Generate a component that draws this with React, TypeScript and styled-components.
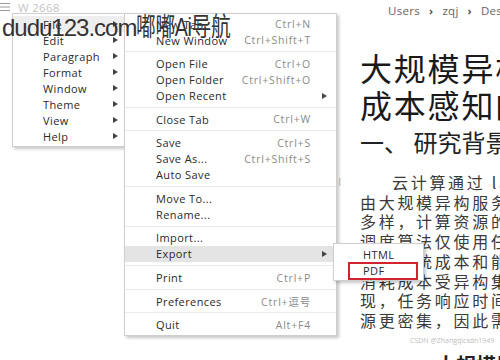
import React from 'react';
import styled, { createGlobalStyle } from 'styled-components';

const GlobalStyle = createGlobalStyle`
  html, body {
    margin: 0;
    padding: 0;
    background: #ffffff;
  }
  body {
    width: 500px;
    height: 360px;
    overflow: hidden;
    font-family: "Open Sans", "Noto Sans CJK SC", sans-serif;
  }
`;

const Page = styled.div`
  position: relative;
  width: 500px;
  height: 360px;
  overflow: hidden;
  display: flex;
  background: #ffffff;
`;

const SidePane = styled.div`
  width: 360px;
  flex-shrink: 0;
`;

const TitleBar = styled.div`
  display: flex;
  align-items: center;
  gap: 8px;
  height: 12px;
  padding-top: 1px;
  color: #c4c4c4;
  font-size: 11.5px;
  letter-spacing: 0.3px;
`;

const Editor = styled.main`
  flex: 1;
  min-width: 0;
  overflow: hidden;
  white-space: nowrap;
  font-family: "Noto Sans CJK SC", sans-serif;
  color: #1e1e1e;
`;

const Breadcrumb = styled.div`
  display: flex;
  align-items: center;
  gap: 9px;
  height: 14px;
  padding: 3px 0 0 28px;
  font-family: "Open Sans", sans-serif;
  font-size: 11.5px;
  color: #666;
  letter-spacing: 0.3px;

  b {
    font-size: 11px;
    color: #555;
  }
`;

const Title = styled.h1`
  margin: 32px 0 0;
  font-size: 32px;
  line-height: 37px;
  font-weight: 400;
  letter-spacing: 1.8px;
  color: #1a1a1a;
`;

const TitleLine = styled.span`
  display: block;
`;

const SectionHeading = styled.h2`
  margin: 4px 0 0;
  font-size: 24px;
  line-height: 30px;
  font-weight: 400;
  color: #222;
`;

const Paragraph = styled.p`
  margin: 16px 0 0;
  font-size: 16px;
  line-height: 19.7px;
  letter-spacing: 2.7px;
  color: #3a3a3a;
`;

const ParaLine = styled.span<{ $indent?: boolean }>`
  display: block;
  padding-left: ${(p) => (p.$indent ? '32px' : '0')};
`;

const Credit = styled.div`
  margin-top: 5px;
  padding-left: 50px;
  font-family: "Open Sans", sans-serif;
  font-size: 7px;
  line-height: 9px;
  color: #c0c0c0;
`;

const NextHeading = styled.div`
  padding-left: 76px;
  margin-top: 8px;
  font-size: 20px;
  line-height: 24px;
  font-weight: 700;
  color: #222;
`;

const Cursor = styled.span`
  position: absolute;
  left: 338px;
  top: 176px;
  font-family: "DejaVu Sans", sans-serif;
  font-size: 11px;
  color: #c8c8c8;
`;

const Watermark = styled.div`
  position: absolute;
  top: 13px;
  left: 2px;
  z-index: 10;
  font-family: "Liberation Sans", "Noto Sans CJK SC", sans-serif;
  font-size: 24px;
  line-height: 28px;
  letter-spacing: -1px;
  color: #333333;
  white-space: nowrap;
  pointer-events: none;

  span {
    display: inline-block;
    font-size: 26px;
    letter-spacing: -0.5px;
    transform: scaleX(0.76);
    transform-origin: left center;
  }
`;

const Panel = styled.div<{ $top: number; $left: number; $width: number; $z: number }>`
  position: absolute;
  top: ${(p) => p.$top}px;
  left: ${(p) => p.$left}px;
  width: ${(p) => p.$width}px;
  z-index: ${(p) => p.$z};
  box-sizing: border-box;
  padding: 2px 0;
  background: #ffffff;
  border: 1px solid #cfcfcf;
  box-shadow: 2px 2px 3px rgba(0, 0, 0, 0.22);
  font-size: 11px;
  color: #2a2a2a;
`;

const Row = styled.div<{ $pad: number; $active?: boolean; $soft?: boolean }>`
  position: relative;
  display: flex;
  align-items: center;
  height: 16px;
  padding-left: ${(p) => p.$pad}px;
  background: ${(p) => (p.$active ? '#e4e4e4' : p.$soft ? '#eeeeee' : 'transparent')};
  letter-spacing: 0.4px;
  white-space: nowrap;
`;

const Label = styled.span`
  flex: 1;
`;

const Shortcut = styled.span`
  color: #8a8a8a;
  font-size: 10.5px;
  letter-spacing: 0.8px;
`;

const ArrowSlot = styled.span<{ $width: number; $right: number }>`
  width: ${(p) => p.$width}px;
  padding-right: ${(p) => p.$right}px;
  box-sizing: border-box;
  display: flex;
  justify-content: flex-end;
`;

const Arrow = styled.span`
  width: 0;
  height: 0;
  border-top: 3px solid transparent;
  border-bottom: 3px solid transparent;
  border-left: 5px solid #444;
`;

const Separator = styled.div`
  height: 1px;
  margin: 3.3px 0;
  background: #ebebeb;
`;

const Annotation = styled.span`
  position: absolute;
  left: 14px;
  right: 5px;
  top: 0;
  bottom: -2px;
  border: 2px solid #d3232f;
  box-sizing: border-box;
`;

type Entry = { label: string; shortcut?: string; sub?: boolean; active?: boolean } | 'sep';

const topMenu = ['File', 'Edit', 'Paragraph', 'Format', 'Window', 'Theme', 'View', 'Help'];

const fileMenu: Entry[] = [
  { label: 'New Tab', shortcut: 'Ctrl+N' },
  { label: 'New Window', shortcut: 'Ctrl+Shift+T' },
  'sep',
  { label: 'Open File', shortcut: 'Ctrl+O' },
  { label: 'Open Folder', shortcut: 'Ctrl+Shift+O' },
  { label: 'Open Recent', sub: true },
  'sep',
  { label: 'Close Tab', shortcut: 'Ctrl+W' },
  'sep',
  { label: 'Save', shortcut: 'Ctrl+S' },
  { label: 'Save As...', shortcut: 'Ctrl+Shift+S' },
  { label: 'Auto Save' },
  'sep',
  { label: 'Move To...' },
  { label: 'Rename...' },
  'sep',
  { label: 'Import...' },
  { label: 'Export', sub: true, active: true },
  'sep',
  { label: 'Print', shortcut: 'Ctrl+P' },
  'sep',
  { label: 'Preferences', shortcut: 'Ctrl+逗号' },
  'sep',
  { label: 'Quit', shortcut: 'Alt+F4' },
];

const paragraph = [
  '云计算通过 laaS 模式',
  '由大规模异构服务器',
  '多样，计算资源的需',
  '调度算法仅使用任务',
  '际的系统成本和能耗',
  '消耗成本受异构集群',
  '现，任务响应时间和',
  '源更密集，因此需要',
];

const Hamburger = () => (
  <svg width="10" height="8" viewBox="0 0 10 8">
    <path d="M0 0.5H10M0 4H10M0 7.5H10" stroke="#9a9a9a" strokeWidth="1" />
  </svg>
);

const App: React.FC = () => {
  return (
    <>
      <GlobalStyle />
      <Page>
        <SidePane>
          <TitleBar>
            <Hamburger />
            <span>W 2668</span>
          </TitleBar>
        </SidePane>
        <Editor>
          <Breadcrumb>
            <span>Users</span>
            <b>›</b>
            <span>zqj</span>
            <b>›</b>
            <span>Desktop</span>
          </Breadcrumb>
          <Title>
            <TitleLine>大规模异构服务器集群</TitleLine>
            <TitleLine>成本感知的任务调度</TitleLine>
          </Title>
          <SectionHeading>一、 研究背景</SectionHeading>
          <Paragraph>
            {paragraph.map((line, i) => (
              <ParaLine key={i} $indent={i === 0}>
                {line}
              </ParaLine>
            ))}
          </Paragraph>
          <Credit>CSDN @Zhangqicsdn1949</Credit>
          <NextHeading>大规模异构</NextHeading>
        </Editor>

        <Cursor>I</Cursor>

        <Panel $top={13} $left={12} $width={113} $z={1}>
          {topMenu.map((item, i) => (
            <Row key={item} $pad={30} $soft={i === 0}>
              <Label>{item}</Label>
              <ArrowSlot $width={20} $right={6}>
                <Arrow />
              </ArrowSlot>
            </Row>
          ))}
        </Panel>

        <Panel $top={13} $left={124} $width={213} $z={2}>
          {fileMenu.map((entry, i) =>
            entry === 'sep' ? (
              <Separator key={i} />
            ) : (
              <Row key={i} $pad={31} $active={entry.active}>
                <Label>{entry.label}</Label>
                {entry.shortcut && <Shortcut>{entry.shortcut}</Shortcut>}
                <ArrowSlot $width={25} $right={9}>
                  {entry.sub && <Arrow />}
                </ArrowSlot>
              </Row>
            )
          )}
        </Panel>

        <Panel $top={243} $left={333} $width={91} $z={3}>
          <Row $pad={29}>
            <Label>HTML</Label>
          </Row>
          <Row $pad={29}>
            <Label>PDF</Label>
            <Annotation />
          </Row>
        </Panel>

        <Watermark>
          dudu123.com<span>嘟嘟Ai导航</span>
        </Watermark>
      </Page>
    </>
  );
};

export default App;
